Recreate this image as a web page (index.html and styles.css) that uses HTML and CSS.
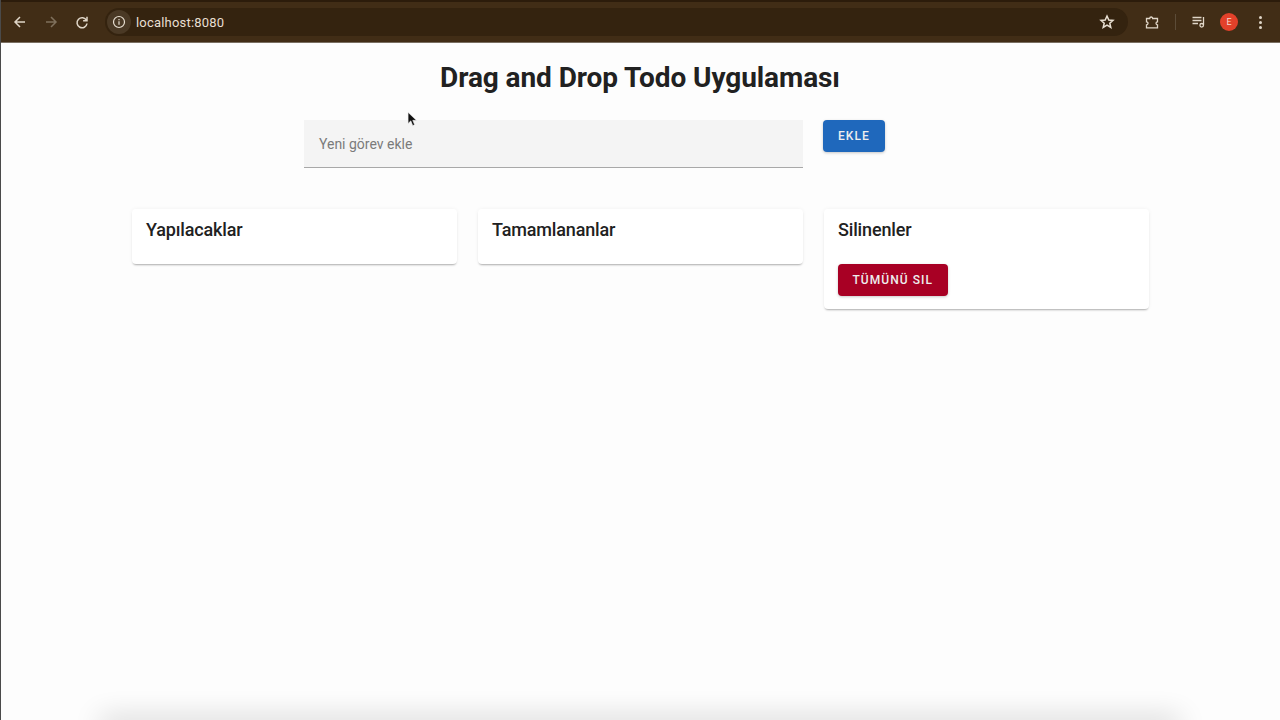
FILE: index.html
```html
<!DOCTYPE html>
<html>
  <head>
    <meta charset="utf-8" />
    <title>Drag and Drop Todo</title>
    <link rel="stylesheet" href="styles.css">
  </head>

  <body>
    <div id="browser-bar">
      <svg class="nav-icon" viewBox="0 0 16 16"><path d="M13 8H3.500M8 3 3 8l5 5"/></svg>
      <svg class="nav-icon dim" viewBox="0 0 16 16"><path d="M3 8h9.500M8 3l5 5-5 5"/></svg>
      <svg class="nav-icon" viewBox="0 0 16 16"><path d="M12.500 6.500A5 5 0 1 0 13 9.500M13 2.800v3.900H9.100"/></svg>
      <div class="address">
        <span class="site-info">
          <svg viewBox="0 0 16 16"><circle cx="8" cy="8" r="5.500"/><path d="M8 7.300v3.500M8 5v1.200"/></svg>
        </span>
        <span class="url">localhost:8080</span>
        <svg class="star" viewBox="0 0 16 16"><path d="m8 2 1.800 4 4.200.4-3.200 2.800 1 4.300L8 11.200l-3.800 2.300 1-4.300L2 6.400 6.200 6z"/></svg>
      </div>
      <svg class="bar-icon" viewBox="0 0 16 16"><path d="M2.500 4.500h3.200a1.500 1.500 0 0 1 3 0h4.800v3.300a1.500 1.500 0 0 0 0 3v3h-11v-3a1.500 1.500 0 0 0 0-3z"/></svg>
      <span class="bar-sep"></span>
      <svg class="bar-icon media" viewBox="0 0 16 16"><path d="M1.500 3.500h9M1.500 6.500h9M1.500 9.500h5.500M12.500 3v8"/><circle cx="10.700" cy="11.300" r="1.800"/></svg>
      <span class="avatar">E</span>
      <span class="menu-dots"><i></i><i></i><i></i></span>
    </div>

    <div id="app">
      <h1>Drag and Drop Todo Uygulaması</h1>

      <div class="add-form">
        <div class="text-field">Yeni görev ekle</div>
        <button class="btn btn-blue">Ekle</button>
      </div>

      <div class="columns">
        <div class="card">
          <h2>Yapılacaklar</h2>
        </div>
        <div class="card">
          <h2>Tamamlananlar</h2>
        </div>
        <div class="card">
          <h2>Silinenler</h2>
          <button class="btn btn-red">Tümünü Sil</button>
        </div>
      </div>
    </div>

    <svg class="cursor" viewBox="0 0 10 14"><path d="M1 1v10l2.500-2.300L5.200 13l1.700-.8-1.700-4H8.500z"/></svg>
    <div class="window-shadow"></div>
  </body>
</html>
```

FILE: styles.css
```css
html,
body {
  height: 100%;
}
body {
  margin: 0;
  font-family: Roboto, sans-serif;
  color: #212121;
  background-color: #fdfdfd;
  border-left: 1px solid #4a4a4a;
  box-sizing: border-box;
  overflow: hidden;
}
#browser-bar {
  display: flex;
  align-items: center;
  height: 43px;
  margin-left: -1px;
  padding: 0 0 0 12px;
  box-sizing: border-box;
  background-color: #412d16;
  border-top: 2px solid #2c1c0b;
  border-bottom: 1px solid #7a6f62;
  color: #e8dfd2;
}
.nav-icon {
  width: 16px;
  height: 16px;
  margin-right: 15px;
  fill: none;
  stroke: #e0d6c8;
  stroke-width: 1.500;
}
.nav-icon.dim {
  stroke: #7f705c;
}
.address {
  display: flex;
  align-items: center;
  width: 1023px;
  height: 28px;
  border-radius: 14px;
  background-color: #34230f;
}
.site-info {
  display: flex;
  align-items: center;
  justify-content: center;
  width: 24px;
  height: 24px;
  margin-left: 2px;
  border-radius: 50%;
  background-color: #4a3925;
}
.site-info svg {
  width: 16px;
  height: 16px;
  fill: none;
  stroke: #e8dfd2;
  stroke-width: 1.200;
}
.url {
  margin-left: 5px;
  font-size: 13px;
  letter-spacing: 0.2px;
}
.star {
  width: 16px;
  height: 16px;
  margin-left: auto;
  margin-right: 13px;
  fill: none;
  stroke: #e8dfd2;
  stroke-width: 1.500;
}
.bar-icon {
  width: 16px;
  height: 16px;
  fill: none;
  stroke: #e0d6c8;
  stroke-width: 1.300;
  margin-left: 16px;
}
.bar-sep {
  width: 1px;
  height: 16px;
  margin-left: 15px;
  background-color: #5c4c38;
}
.bar-icon.media {
  margin-left: 15px;
}
.avatar {
  display: flex;
  align-items: center;
  justify-content: center;
  width: 18px;
  height: 18px;
  margin-left: 13px;
  border-radius: 50%;
  background-color: #e2412a;
  color: #f5d9d0;
  font-size: 9px;
}
.menu-dots {
  display: flex;
  flex-direction: column;
  gap: 2px;
  margin-left: 21px;
}
.menu-dots i {
  width: 3px;
  height: 3px;
  border-radius: 50%;
  background-color: #e0d6c8;
}
#app {
  padding: 16px 130px 0 131px;
}
h1 {
  margin: 0 2px 0 0;
  font-size: 28px;
  letter-spacing: -0.08px;
  line-height: 38px;
  font-weight: 700;
  text-align: center;
}
.add-form {
  display: flex;
  align-items: flex-start;
  gap: 20px;
  margin-top: 23px;
  margin-left: 172px;
}
.text-field {
  width: 484px;
  height: 47px;
  padding-left: 15px;
  line-height: 48px;
  font-size: 14px;
  color: #7b7b7b;
  background-color: #f4f4f4;
  border-bottom: 1px solid #a8a8a8;
}
.btn {
  height: 32px;
  padding: 0 15px;
  border: 0;
  border-radius: 4px;
  font-family: Roboto, sans-serif;
  font-size: 12px;
  font-weight: 500;
  letter-spacing: 1.050px;
  text-transform: uppercase;
  color: #eeeeee;
  box-shadow: 0 1px 3px rgba(0, 0, 0, 0.22);
}
.btn-blue {
  background-color: #1f68bc;
}
.btn-red {
  display: block;
  margin-top: 26px;
  padding: 0 14.500px;
  background-color: #a80024;
}
.columns {
  display: grid;
  grid-template-columns: repeat(3, 324.500px);
  column-gap: 21.500px;
  align-items: start;
  margin-top: 41px;
}
.card {
  min-height: 55px;
  padding: 12px 14px 13px;
  box-sizing: border-box;
  border-radius: 4px;
  background-color: #fff;
  box-shadow: 0 2px 2px -1px rgba(0, 0, 0, 0.3), 0 0 4px rgba(0, 0, 0, 0.05);
}
h2 {
  margin: 0;
  font-size: 18px;
  letter-spacing: -0.15px;
  line-height: 16px;
  padding-top: 1px;
  font-weight: 500;
}
.cursor {
  position: absolute;
  left: 407px;
  top: 111px;
  width: 11px;
  height: 16px;
  fill: #111;
  stroke: #eee;
  stroke-width: 0.500;
}
.window-shadow {
  position: absolute;
  left: 100px;
  right: 100px;
  bottom: -14px;
  height: 14px;
  box-shadow: 0 -2px 28px rgba(0, 0, 0, 0.2);
}
```
